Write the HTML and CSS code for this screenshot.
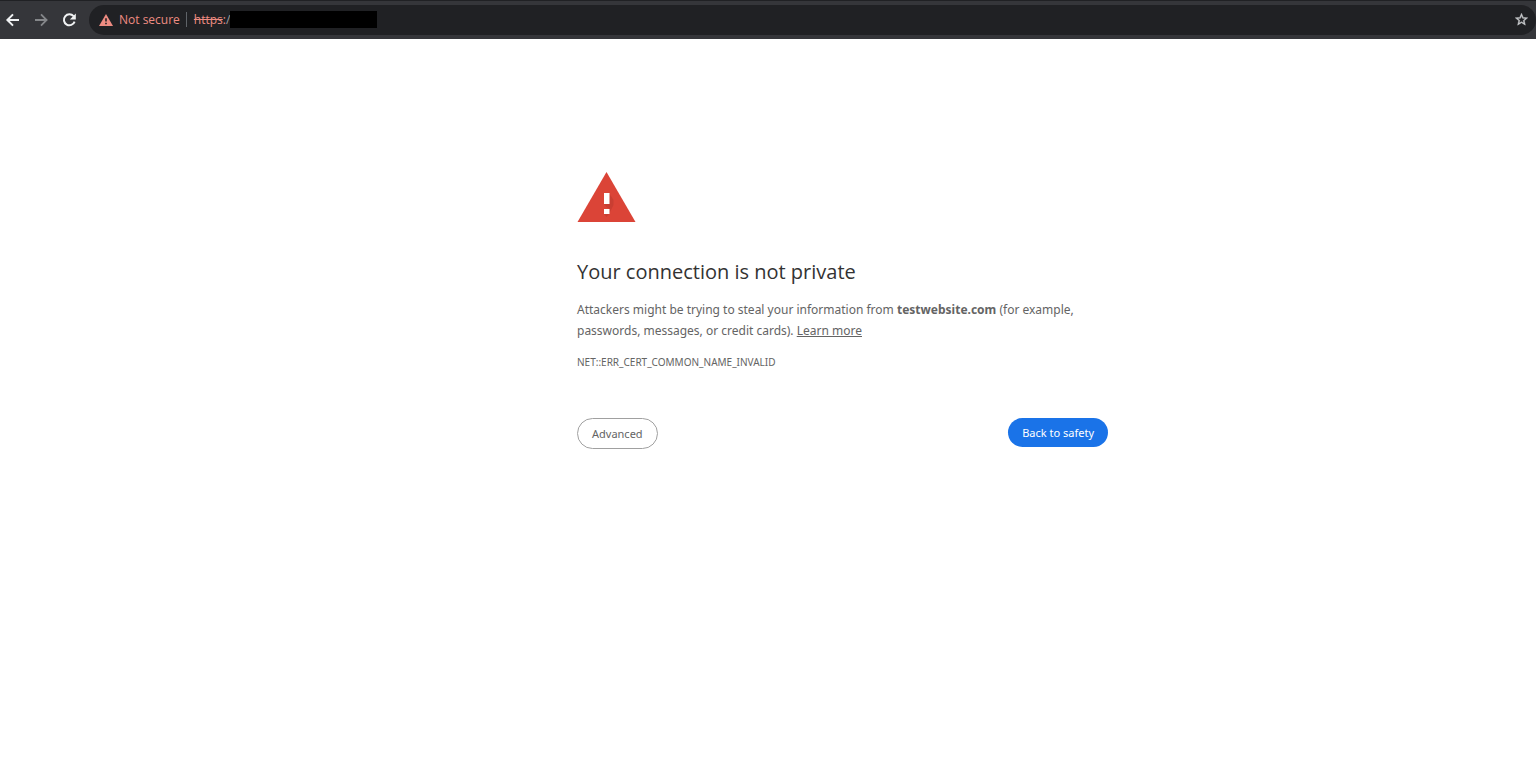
FILE: index.html
```html
<!DOCTYPE html>
<html lang="en">
<head>
<meta charset="utf-8">
<meta name="viewport" content="width=device-width, initial-scale=1">
<title>Privacy error</title>
<link rel="stylesheet" href="styles.css">
</head>
<body>
<header class="toolbar">
  <nav class="nav-buttons" aria-label="Navigation">
    <button class="icon-button" type="button" aria-label="Back">
      <svg viewBox="0 0 16 16" width="16" height="16"><path d="M14 8H3M8 2.4 2.4 8 8 13.6" fill="none" stroke="#f1f3f4" stroke-width="2"/></svg>
    </button>
    <button class="icon-button" type="button" aria-label="Forward">
      <svg viewBox="0 0 16 16" width="16" height="16"><path d="M2 8h11M8 2.4 13.6 8 8 13.6" fill="none" stroke="#85878a" stroke-width="1.8"/></svg>
    </button>
    <button class="icon-button" type="button" aria-label="Reload">
      <svg viewBox="0 0 16 16" width="16" height="16"><path d="M12.6 4.2A5.5 5.5 0 1 0 13.6 9.6" fill="none" stroke="#f1f3f4" stroke-width="2"/><path d="M14.8 1.4v6H8.8z" fill="#f1f3f4"/></svg>
    </button>
  </nav>
  <div class="address-bar">
    <button class="security" type="button">
      <svg viewBox="0 0 14 12" width="14" height="12"><path d="M7 0 14 12H0z" fill="#ee8c82"/><path d="M6.2 4.2h1.6v3.4H6.2zM6.2 8.7h1.6v1.6H6.2z" fill="#202124"/></svg>
      <span>Not secure</span>
    </button>
    <span class="divider"></span>
    <span class="url"><s class="scheme">https</s><span class="colon">:</span>/</span>
    <span class="redacted"></span>
    <button class="icon-button bookmark" type="button" aria-label="Bookmark this page">
      <svg viewBox="0 0 24 24" width="15" height="15"><path d="M22 9.24l-7.19-.62L12 2 9.19 8.63 2 9.24l5.46 4.73L5.82 21 12 17.27 18.18 21l-1.63-7.03L22 9.24zM12 15.4l-3.76 2.27 1-4.28-3.32-2.88 4.38-.38L12 6.1l1.71 4.04 4.38.38-3.32 2.88 1 4.28L12 15.4z" fill="#c8cacd" stroke="#c8cacd" stroke-width=".7"/></svg>
    </button>
  </div>
</header>
<main class="page">
  <section class="warning">
    <svg class="warning-icon" viewBox="0 0 58 50" width="59" height="50" role="img" aria-label="Warning">
      <path d="M29 0 58 50H0z" fill="#db4437"/>
      <path d="M31.5 21 36 28V33L31.5 42 29 45 26.5 42V37h5.5L29 35 26.5 32H31.5z" fill="#b8382d" opacity=".5"/>
      <path d="M26.5 21H32v11h-5.5zM26.5 37H32v5h-5.5z" fill="#fff"/>
    </svg>
    <h1 class="title">Your connection is not private</h1>
    <p class="message">Attackers might be trying to steal your information from <strong>testwebsite.com</strong> (for example, passwords, messages, or credit cards). <a href="#learn-more">Learn more</a></p>
    <p class="error-code">NET::ERR_CERT_COMMON_NAME_INVALID</p>
    <div class="actions">
      <button class="button button-outline" type="button">Advanced</button>
      <button class="button button-primary" type="button">Back to safety</button>
    </div>
  </section>
</main>
</body>
</html>
```
FILE: styles.css
```css
* {
  box-sizing: border-box;
}

body {
  margin: 0;
  background: #fff;
  color: #646464;
  font-family: "Noto Sans", "Open Sans", sans-serif;
}

button {
  margin: 0;
  padding: 0;
  border: 0;
  background: none;
  color: inherit;
  font: inherit;
}

svg {
  display: block;
}

.toolbar {
  display: flex;
  align-items: center;
  gap: 12px;
  height: 39px;
  padding: 0 0 1px 5px;
  border-top: 1px solid #202124;
  background: #35363a;
  font-family: "Open Sans", "Noto Sans", sans-serif;
}

.nav-buttons {
  display: flex;
  gap: 12px;
}

.icon-button {
  display: grid;
  place-items: center;
  width: 16px;
  height: 16px;
}

.address-bar {
  display: flex;
  flex: 1;
  align-items: center;
  height: 30px;
  padding: 0 7px 0 10px;
  border-radius: 15px;
  background: #202124;
  font-size: 12px;
}

.security {
  display: flex;
  align-items: center;
  gap: 6px;
  color: #ee8c82;
}

.divider {
  width: 1px;
  height: 15px;
  margin: 0 7px 0 6px;
  background: #5f6368;
}

.url {
  color: #9aa0a6;
}

.scheme,
.colon {
  color: #ee8c82;
}

.redacted {
  width: 147px;
  height: 17px;
  background: #000;
}

.bookmark {
  margin-left: auto;
}

.page {
  padding: 133px 0 48px 149px;
}

.warning {
  max-width: 531px;
  margin: 0 auto;
}

.title {
  margin: 36px 0 13px;
  color: #333;
  font-family: "Open Sans", "Noto Sans", sans-serif;
  font-size: 20px;
  font-weight: 400;
  line-height: 28px;
}

.message {
  margin: 0;
  font-size: 12px;
  line-height: 21px;
}

.message a {
  color: inherit;
}

.error-code {
  margin: 12px 0 0;
  font-size: 10px;
  line-height: 18px;
}

.actions {
  display: flex;
  justify-content: space-between;
  align-items: flex-start;
  margin-top: 47px;
  font-size: 11px;
}

.button {
  height: 29px;
  padding: 0 14px;
  border-radius: 16px;
}

.button-outline {
  height: 31px;
  border: 1px solid #a0a0a0;
}

.button-primary {
  background: #1a73e8;
  color: #fff;
}
```
